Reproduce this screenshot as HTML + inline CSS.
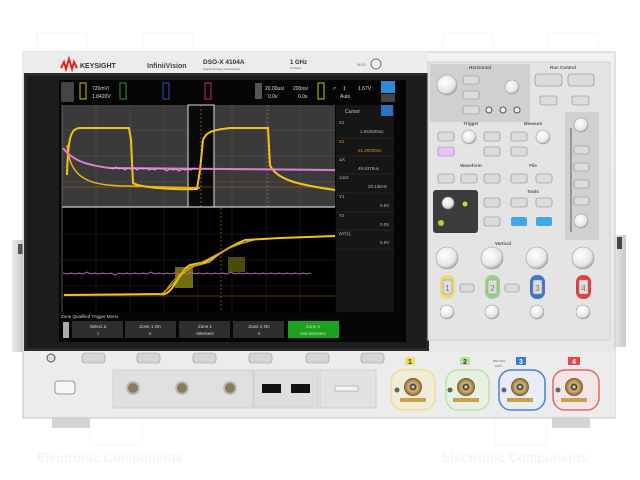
<!DOCTYPE html>
<html><head><meta charset="utf-8"><style>
html,body{margin:0;padding:0;background:#fff;width:640px;height:480px;overflow:hidden}
svg{display:block}
text{font-family:"Liberation Sans",sans-serif}
</style></head><body>
<svg width="640" height="480" viewBox="0 0 640 480" xmlns="http://www.w3.org/2000/svg">
<defs>
<linearGradient id="body" x1="0" y1="0" x2="0" y2="1"><stop offset="0" stop-color="#f2f2f2"/><stop offset="1" stop-color="#e4e4e4"/></linearGradient>
<linearGradient id="rail" x1="0" y1="0" x2="1" y2="0"><stop offset="0" stop-color="#e8e8e8"/><stop offset="1" stop-color="#c8c8c8"/></linearGradient>
<radialGradient id="knob" cx="0.4" cy="0.35" r="0.7"><stop offset="0" stop-color="#ffffff"/><stop offset="0.7" stop-color="#e6e6e6"/><stop offset="1" stop-color="#9a9a9a"/></radialGradient>
<radialGradient id="bnc" cx="0.5" cy="0.5" r="0.5"><stop offset="0" stop-color="#fff"/><stop offset="0.3" stop-color="#333"/><stop offset="0.45" stop-color="#d9b77a"/><stop offset="0.8" stop-color="#a5844a"/><stop offset="1" stop-color="#6d5530"/></radialGradient>
</defs>
<!-- watermark -->
<g fill="none" stroke="#f6f6f6" stroke-width="1.2">
<rect x="37" y="33" width="50" height="50"/><rect x="143" y="33" width="50" height="50"/>
<rect x="443" y="33" width="50" height="50"/><rect x="548" y="33" width="50" height="50"/>
<rect x="90" y="395" width="52" height="50"/><rect x="495" y="395" width="52" height="50"/>
</g>
<text x="37" y="462" font-size="13" font-weight="bold" fill="#f4f4f4">Electronic Components</text>
<text x="442" y="462" font-size="13" font-weight="bold" fill="#f4f4f4">Electronic Components</text>

<!-- side rails -->
<rect x="12" y="240" width="12" height="112" fill="url(#rail)"/>
<rect x="614" y="235" width="12" height="112" fill="url(#rail)"/>
<rect x="617" y="237" width="5" height="12" fill="#444"/>
<rect x="18" y="244" width="5" height="10" fill="#555"/>
<!-- feet -->
<rect x="52" y="415" width="38" height="13" fill="#d4d4d4"/>
<rect x="552" y="415" width="38" height="13" fill="#d4d4d4"/>
<!-- body -->
<rect x="23" y="52" width="592" height="366" fill="url(#body)" stroke="#c8c8c8"/>
<rect x="23" y="52" width="405" height="22" fill="#ececec"/>
<!-- top strip labels -->
<path d="M61 68 l3 -6 2 7 3 -10 3 10 2 -7 3 6" fill="none" stroke="#e0241b" stroke-width="2"/>
<text x="80" y="68" font-size="7" font-weight="bold" fill="#333">KEYSIGHT</text>
<text x="147" y="68" font-size="7" font-weight="bold" fill="#444">InfiniiVision</text>
<text x="203" y="64" font-size="6.5" font-weight="bold" fill="#333">DSO-X 4104A</text>
<text x="203" y="70" font-size="3" fill="#666">Digital Storage Oscilloscope</text>
<text x="290" y="64" font-size="6" font-weight="bold" fill="#333">1 GHz</text>
<text x="290" y="69" font-size="3" fill="#666">5 GSa/s</text>
<circle cx="376" cy="64" r="5" fill="none" stroke="#777"/>
<text x="357" y="66" font-size="4" fill="#777">MSO</text>
<!-- bezel -->
<rect x="24" y="73" width="405" height="278" fill="#2a2a2a"/>
<rect x="27" y="76" width="399" height="272" fill="#1c1c1c"/>
<!-- screen -->
<rect x="59" y="80" width="347" height="262" fill="#050505"/>
<!-- top bar -->
<rect x="61" y="82" width="13" height="20" fill="#444" rx="1"/>
<rect x="80" y="83" width="6" height="16" fill="none" stroke="#c8c800"/>
<text x="92" y="90" font-size="5" fill="#ddd">720mV/</text>
<text x="92" y="98" font-size="5" fill="#ddd">1.8420V</text>
<rect x="120" y="83" width="6" height="16" fill="none" stroke="#2a9a2a"/>
<rect x="163" y="83" width="6" height="16" fill="none" stroke="#2b4fb8"/>
<rect x="205" y="83" width="6" height="16" fill="none" stroke="#c02a6a"/>
<rect x="255" y="83" width="7" height="16" fill="#555"/>
<text x="265" y="90" font-size="5" fill="#ddd">20.00us/</text>
<text x="268" y="98" font-size="5" fill="#ddd">0.0s</text>
<text x="293" y="90" font-size="5" fill="#ddd">200ns/</text>
<text x="298" y="98" font-size="5" fill="#ddd">0.0s</text>
<rect x="318" y="83" width="6" height="16" fill="none" stroke="#c8c800"/>
<text x="332" y="90" font-size="5" fill="#cc0">↗</text>
<text x="343" y="90" font-size="5" fill="#ddd">1</text>
<text x="340" y="98" font-size="5" fill="#ddd">Auto</text>
<text x="358" y="90" font-size="5" fill="#ddd">1.67V</text>
<rect x="381" y="81" width="14" height="12" fill="#2a8ad4"/>
<rect x="381" y="94" width="14" height="8" fill="#444"/>
<!-- upper grid -->
<rect x="62" y="105" width="273" height="102" fill="#3a3a3a"/>
<g stroke="#555" stroke-width="0.5">
<path d="M96 105V207M130 105V207M164 105V207M198 105V207M232 105V207M266 105V207M300 105V207M62 130H335M62 156H335M62 182H335"/>
</g>
<rect x="188" y="105" width="26" height="102" fill="#0a0a0a" stroke="#ddd" stroke-width="1"/>
<path d="M201 105V207M268 105V207" stroke="#d07a1a" stroke-width="0.6" stroke-dasharray="2 2"/>
<path d="M62 187H335" stroke="#b06a20" stroke-width="0.6"/>
<!-- upper traces -->
<path d="M67 175 C68 140 70 128 80 128 L129 128 L131 140 L133 183 C140 188 180 190 197 189 L200 170 L203 140 C206 132 212 130 230 128 L268 128 L270 165 C276 180 300 185 335 190" fill="none" stroke="#f4c21a" stroke-width="2"/>
<path d="M67 145 C70 180 90 186 130 186 L200 188" fill="none" stroke="#e6b418" stroke-width="1.5"/>
<path d="M63 148 C72 160 85 165 110 168 L335 170" fill="none" stroke="#e07ad8" stroke-width="2"/>
<path d="M110 168 l3 1 3 -2 3 2 3 -1 3 2 3 -2 3 1 3 -1 3 2 3 -2 3 1 3 -1 3 2 3 -1 3 1 3 -2 3 1 3 0 3 2 3 -2 3 1 3 -1 3 2 3 -2 3 1 3 -1 3 1 3 -2 3 1" fill="none" stroke="#f09ae8" stroke-width="1"/>
<!-- lower grid -->
<rect x="62" y="208" width="273" height="104" fill="#000"/>
<g stroke="#2a2a2a" stroke-width="0.5">
<path d="M96 208V312M130 208V312M164 208V312M198 208V312M232 208V312M266 208V312M300 208V312M62 234H335M62 260H335M62 286H335"/>
</g>
<path d="M62 207H335" stroke="#ccc" stroke-width="1.2"/>
<path d="M62 105V312" stroke="#888" stroke-width="0.6"/>
<path d="M221 208V312" stroke="#d07a1a" stroke-width="0.6" stroke-dasharray="2 2"/>
<path d="M62 296H335" stroke="#b06a20" stroke-width="0.6"/>
<rect x="175" y="267" width="18" height="21" fill="#8a8a10" opacity="0.8"/>
<rect x="228" y="257" width="17" height="15" fill="#6a6a10" opacity="0.7"/>
<path d="M63 273 l4 1 4 -1 4 1 4 -1 4 1 4 -2 4 2 4 -1 4 1 4 -1 4 1 4 -1 4 2 4 -2 4 1 4 -1 4 1 4 -1 4 1 4 -1 4 1 4 -2 4 2 4 -1 4 1 4 -1 4 1 4 -1 4 1 4 -1 4 1 4 -2 4 2 4 -1 4 1 4 -1 4 1 4 -1 4 1 4 -1 4 1 4 -2 4 2 4 -1 4 1 4 -1 4 1 4 -1 4 1 4 -1 4 1 4 -1 4 1 4 -1 4 1 4 -1 4 1 4 -1 4 1 4 -1 4 1 4 -1" fill="none" stroke="#b46ab0" stroke-width="1"/>
<path d="M64 295 L165 294 C175 290 180 270 190 265 L205 262 C215 258 225 248 245 240 L280 238 L335 236" fill="none" stroke="#f4c21a" stroke-width="2"/>
<path d="M160 295 C172 288 180 272 195 266 L210 262 C220 252 235 244 250 241" fill="none" stroke="#e0b018" stroke-width="1.2"/>
<path d="M163 296 C168 285 182 268 198 264 C215 256 228 246 255 240" fill="none" stroke="#c89a12" stroke-width="1"/>
<!-- sidebar -->
<rect x="336" y="105" width="58" height="207" fill="#161616"/>
<rect x="381" y="105" width="12" height="11" fill="#2a70c4"/>
<text x="345" y="113" font-size="5" fill="#ccc">Cursor</text>
<g font-size="4.5" fill="#bbb">
<text x="339" y="124">X1</text><text x="360" y="133">1.562500us</text>
<text x="339" y="143" fill="#e08a20">X2</text><text x="358" y="152" fill="#e08a20">51.20000us</text>
<text x="339" y="161">ΔX</text><text x="358" y="170">49.6375us</text>
<text x="339" y="179">1/ΔX</text><text x="368" y="188">20.13kHz</text>
<text x="339" y="198">Y1</text><text x="380" y="207">0.0V</text>
<text x="339" y="217">Y2</text><text x="380" y="226">0.0V</text>
<text x="339" y="235">ΔY(1)</text><text x="380" y="244">0.0V</text>
</g>
<g stroke="#333" stroke-width="0.5"><path d="M336 138H394M336 156H394M336 174H394M336 193H394M336 212H394M336 230H394M336 249H394"/></g>
<!-- menu -->
<text x="61" y="318" font-size="4.5" fill="#ccc">Zone Qualified Trigger Menu</text>
<rect x="63" y="322" width="6" height="16" fill="#aaa"/>
<g font-size="4.5" fill="#ddd" text-anchor="middle">
<rect x="72" y="321" width="51" height="17" fill="#2e2e2e"/><text x="98" y="328">Select a</text><text x="98" y="335" fill="#cc0">1</text>
<rect x="125" y="321" width="51" height="17" fill="#2e2e2e"/><text x="150" y="328">Zone 1 On</text><text x="150" y="335" fill="#4a8ad4">■</text>
<rect x="179" y="321" width="51" height="17" fill="#2e2e2e"/><text x="205" y="328">Zone 1</text><text x="205" y="335">Intersect</text>
<rect x="233" y="321" width="51" height="17" fill="#2e2e2e"/><text x="259" y="328">Zone 2 On</text><text x="259" y="335" fill="#4a8ad4">■</text>
<rect x="288" y="321" width="51" height="17" fill="#1ca21c"/><text x="313" y="328">Zone 2</text><text x="313" y="335">Not intersect</text>
</g>

<!-- right panel -->
<rect x="428" y="62" width="182" height="278" fill="#e4e4e4" stroke="#d0d0d0"/>
<rect x="430" y="64" width="100" height="58" fill="#d0d0d0" rx="2"/>
<rect x="565" y="112" width="34" height="128" fill="#d0d0d0" rx="2"/>
<rect x="433" y="190" width="45" height="43" fill="#3c3c3c" rx="3"/>
<g font-size="4.5" fill="#555" font-weight="bold" text-anchor="middle">
<text x="480" y="69">Horizontal</text><text x="563" y="69">Run Control</text>
<text x="471" y="125">Trigger</text><text x="533" y="125">Measure</text>
<text x="471" y="167">Waveform</text><text x="533" y="167">File</text>
<text x="533" y="193">Tools</text><text x="503" y="245">Vertical</text>
</g>
<g fill="url(#knob)" stroke="#999" stroke-width="0.6">
<circle cx="447" cy="85" r="10"/><circle cx="512" cy="87" r="7"/>
<circle cx="469" cy="137" r="7"/><circle cx="543" cy="137" r="7"/>
<circle cx="581" cy="125" r="7"/><circle cx="581" cy="221" r="7"/>
<circle cx="447" cy="258" r="11"/><circle cx="492" cy="258" r="11"/><circle cx="537" cy="258" r="11"/><circle cx="583" cy="258" r="11"/>
<circle cx="447" cy="312" r="7"/><circle cx="492" cy="312" r="7"/><circle cx="537" cy="312" r="7"/><circle cx="583" cy="312" r="7"/>
<circle cx="448" cy="203" r="6"/>
</g>
<g fill="#dcdcdc" stroke="#888" stroke-width="0.6">
<rect x="463" y="76" width="16" height="8" rx="2"/><rect x="463" y="91" width="16" height="8" rx="2"/><rect x="463" y="106" width="16" height="8" rx="2"/>
<rect x="535" y="74" width="27" height="12" rx="3"/><rect x="568" y="74" width="26" height="12" rx="3"/>
<rect x="540" y="96" width="17" height="9" rx="2"/><rect x="572" y="96" width="17" height="9" rx="2"/>
<rect x="438" y="132" width="16" height="9" rx="2"/><rect x="484" y="132" width="16" height="9" rx="2"/><rect x="484" y="147" width="16" height="9" rx="2"/>
<rect x="511" y="132" width="16" height="9" rx="2"/><rect x="511" y="147" width="16" height="9" rx="2"/>
<rect x="438" y="174" width="16" height="9" rx="2"/><rect x="461" y="174" width="16" height="9" rx="2"/><rect x="484" y="174" width="16" height="9" rx="2"/>
<rect x="511" y="174" width="16" height="9" rx="2"/><rect x="536" y="174" width="16" height="9" rx="2"/>
<rect x="484" y="198" width="16" height="9" rx="2"/><rect x="484" y="217" width="16" height="9" rx="2"/>
<rect x="511" y="198" width="16" height="9" rx="2"/><rect x="536" y="198" width="16" height="9" rx="2"/>
<rect x="574" y="146" width="15" height="8" rx="2"/><rect x="574" y="163" width="15" height="8" rx="2"/><rect x="574" y="180" width="15" height="8" rx="2"/><rect x="574" y="197" width="15" height="8" rx="2"/>
<rect x="460" y="284" width="14" height="8" rx="2"/><rect x="505" y="284" width="14" height="8" rx="2"/>
</g>
<rect x="438" y="147" width="16" height="9" rx="2" fill="#e8c4f4" stroke="#b070d0" stroke-width="0.6"/>
<rect x="511" y="217" width="16" height="9" rx="2" fill="#3fa8ec"/><rect x="536" y="217" width="16" height="9" rx="2" fill="#3fa8ec"/>
<circle cx="489" cy="110" r="3" fill="#eee" stroke="#555"/><circle cx="503" cy="110" r="3" fill="#eee" stroke="#555"/><circle cx="517" cy="110" r="3" fill="#eee" stroke="#555"/>
<circle cx="465" cy="204" r="2.5" fill="#c8d830"/><circle cx="441" cy="223" r="3" fill="#b8cc40"/>
<path d="M571 128V232" stroke="#444" stroke-width="0.8" fill="none"/>
<!-- channel ovals -->
<rect x="440" y="275" width="15" height="24" rx="7" fill="#efd77a"/><rect x="443" y="280" width="9" height="14" rx="1" fill="#ddd" stroke="#888" stroke-width="0.5"/><text x="447.5" y="291" font-size="8" fill="#777" text-anchor="middle">1</text>
<rect x="485" y="275" width="15" height="24" rx="7" fill="#9bd08a"/><rect x="488" y="280" width="9" height="14" rx="1" fill="#ddd" stroke="#888" stroke-width="0.5"/><text x="492.5" y="291" font-size="8" fill="#777" text-anchor="middle">2</text>
<rect x="530" y="275" width="15" height="24" rx="7" fill="#3f78c8"/><rect x="533" y="280" width="9" height="14" rx="1" fill="#ddd" stroke="#888" stroke-width="0.5"/><text x="537.5" y="291" font-size="8" fill="#777" text-anchor="middle">3</text>
<rect x="576" y="275" width="15" height="24" rx="7" fill="#e04040"/><rect x="579" y="280" width="9" height="14" rx="1" fill="#ddd" stroke="#888" stroke-width="0.5"/><text x="583.5" y="291" font-size="8" fill="#777" text-anchor="middle">4</text>

<!-- bottom strip -->
<rect x="24" y="351" width="591" height="66" fill="#ececec"/>
<circle cx="51" cy="358" r="4" fill="#ddd" stroke="#555"/>
<g fill="#d6d6d6" stroke="#999" stroke-width="0.6">
<rect x="82" y="353" width="23" height="10" rx="3"/><rect x="137" y="353" width="23" height="10" rx="3"/><rect x="193" y="353" width="23" height="10" rx="3"/>
<rect x="249" y="353" width="23" height="10" rx="3"/><rect x="306" y="353" width="23" height="10" rx="3"/><rect x="361" y="353" width="23" height="10" rx="3"/>
</g>
<rect x="55" y="381" width="20" height="13" rx="3" fill="#f6f6f6" stroke="#999"/>
<rect x="113" y="370" width="140" height="38" fill="#e0e0e0" stroke="#d0d0d0"/>
<rect x="254" y="370" width="64" height="38" fill="#dedede" stroke="#d0d0d0"/>
<rect x="320" y="370" width="56" height="38" fill="#e2e2e2" stroke="#d0d0d0"/>
<circle cx="133" cy="388" r="6" fill="#8c7a5c" stroke="#bbb" stroke-width="2"/><circle cx="182" cy="388" r="6" fill="#8c7a5c" stroke="#bbb" stroke-width="2"/><circle cx="230" cy="388" r="6" fill="#8c7a5c" stroke="#bbb" stroke-width="2"/>
<rect x="262" y="384" width="19" height="9" fill="#111"/><rect x="291" y="384" width="19" height="9" fill="#111"/>
<rect x="335" y="386" width="23" height="5" fill="#f4f4f4" stroke="#999" stroke-width="0.6"/>
<!-- probe inputs -->
<rect x="386" y="354" width="228" height="62" fill="#ececec"/>
<g stroke-width="1.5">
<rect x="391" y="370" width="44" height="40" rx="12" fill="#f0ecd8" stroke="#eedc98"/>
<rect x="446" y="370" width="43" height="40" rx="12" fill="#e8f0e2" stroke="#bfe0ae"/>
<rect x="499" y="370" width="46" height="40" rx="12" fill="#e8ecf4" stroke="#4a82d0"/>
<rect x="553" y="370" width="46" height="40" rx="12" fill="#f4e6e6" stroke="#e06868"/>
</g>
<circle cx="413" cy="387" r="9" fill="url(#bnc)"/><circle cx="466" cy="387" r="9" fill="url(#bnc)"/><circle cx="520" cy="387" r="9" fill="url(#bnc)"/><circle cx="574" cy="387" r="9" fill="url(#bnc)"/>
<g fill="#c8a050"><rect x="400" y="398" width="26" height="4"/><rect x="453" y="398" width="26" height="4"/><rect x="507" y="398" width="26" height="4"/><rect x="561" y="398" width="26" height="4"/></g>
<g fill="#666"><circle cx="397" cy="390" r="2.5"/><circle cx="450" cy="390" r="2.5"/><circle cx="504" cy="390" r="2.5"/><circle cx="558" cy="390" r="2.5"/></g>
<rect x="405" y="357" width="10" height="8" fill="#f2dc6a"/><text x="410" y="364" font-size="7" text-anchor="middle" fill="#333" font-weight="bold">1</text>
<rect x="460" y="357" width="10" height="8" fill="#b4e0a0"/><text x="465" y="364" font-size="7" text-anchor="middle" fill="#333" font-weight="bold">2</text>
<rect x="516" y="357" width="10" height="8" fill="#3a7ad4"/><text x="521" y="364" font-size="7" text-anchor="middle" fill="#fff" font-weight="bold">3</text>
<rect x="568" y="357" width="12" height="8" fill="#e84848"/><text x="574" y="364" font-size="7" text-anchor="middle" fill="#fff" font-weight="bold">4</text>
<text x="493" y="362" font-size="3" fill="#555">50Ω ±1%</text><text x="495" y="367" font-size="3" fill="#555">CAT I</text>
</svg>
</body></html>
